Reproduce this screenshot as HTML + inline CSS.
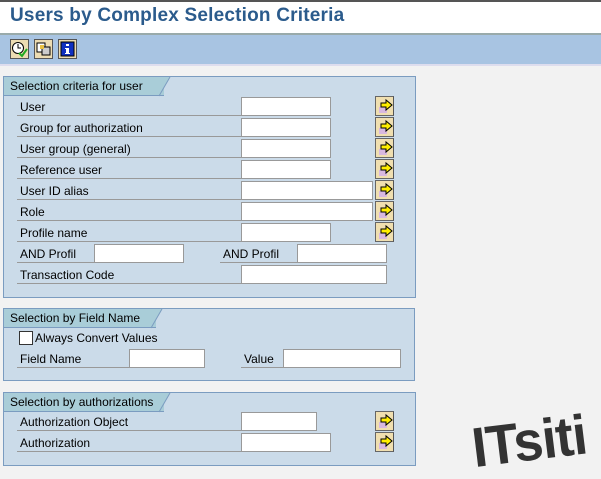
<!DOCTYPE html>
<html><head><meta charset="utf-8"><style>
body{margin:0;width:601px;height:475px;background:#f2f2f2;font-family:"Liberation Sans",sans-serif;font-size:12px;position:relative;overflow:hidden}
div{position:absolute;box-sizing:border-box}
.box{background:#cbdbe9;border:1px solid #7b9cc0}
.tab{background:#a9cdd8;height:19px;top:0;left:0;padding:2px 0 0 6px;color:#000;white-space:nowrap;border-bottom:1px solid #7b9cc0}
.lab{height:20px;border-bottom:1px solid #999;padding:4px 0 0 3px;color:#000}
.inp{height:19px;background:#fff;border:1px solid #999}
.btn{width:19px;height:20px;background:#f0dfb0;border:1px solid #666;border-right-color:#555}
</style></head><body>
<div style="left:0;top:0;width:601px;height:2px;background:#555"></div>
<div style="left:0;top:2px;width:601px;height:31px;background:#fff"></div>
<div style="left:10px;top:5px;font-size:19px;font-weight:bold;color:#2b5b8c;letter-spacing:0.2px">Users by Complex Selection Criteria</div>
<div style="left:0;top:33px;width:601px;height:2px;background:#9aa"></div>
<div style="left:0;top:35px;width:601px;height:29px;background:#a8c4e2"></div>
<div style="left:0;top:64px;width:601px;height:2px;background:#dde"></div>

<div style="left:10px;top:39px;width:19px;height:20px;background:#ecdcb2;border:1px solid #555">
<svg width="17" height="18" style="position:absolute;left:0;top:0"><circle cx="7" cy="8" r="5.5" fill="#fff" stroke="#000"/><path d="M7 4v4h3" stroke="#000" fill="none"/><path d="M8 13l3 3 5-7" stroke="#2a2" stroke-width="2" fill="none"/></svg></div>
<div style="left:34px;top:39px;width:19px;height:20px;background:#ecdcb2;border:1px solid #555">
<svg width="17" height="18" style="position:absolute;left:0;top:0"><rect x="2" y="3" width="8" height="9" fill="#fff" stroke="#000"/><rect x="7" y="7" width="8" height="8" fill="#ccc" stroke="#000"/><rect x="5" y="5" width="4" height="4" fill="#e8c040"/></svg></div>
<div style="left:58px;top:39px;width:19px;height:20px;background:#ecdcb2;border:1px solid #555">
<svg width="17" height="18" style="position:absolute;left:0;top:0"><rect x="2" y="2" width="13" height="14" fill="#1030c0" stroke="#000"/><rect x="7" y="4" width="3" height="2" fill="#fff"/><path d="M6 8h4v5h1v1H6v-1h1V9H6z" fill="#fff"/></svg></div>

<div class="box" style="left:3px;top:76px;width:413px;height:222px">
<div class="tab" style="width:160px">Selection criteria for user</div>
<svg style="position:absolute;left:155px;top:0" width="12" height="20"><polygon points="0,0 11,0 0,19" fill="#a9cdd8"/><line x1="11" y1="0" x2="0" y2="19" stroke="#7b9cc0"/></svg>
</div>
<div class="lab" style="left:17px;top:96px;width:224px">User</div><div class="inp" style="left:241px;top:97px;width:90px"></div>
<div class="lab" style="left:17px;top:117px;width:224px">Group for authorization</div><div class="inp" style="left:241px;top:118px;width:90px"></div>
<div class="lab" style="left:17px;top:138px;width:224px">User group (general)</div><div class="inp" style="left:241px;top:139px;width:90px"></div>
<div class="lab" style="left:17px;top:159px;width:224px">Reference user</div><div class="inp" style="left:241px;top:160px;width:90px"></div>
<div class="lab" style="left:17px;top:180px;width:224px">User ID alias</div><div class="inp" style="left:241px;top:181px;width:132px"></div>
<div class="lab" style="left:17px;top:201px;width:224px">Role</div><div class="inp" style="left:241px;top:202px;width:132px"></div>
<div class="lab" style="left:17px;top:222px;width:224px">Profile name</div><div class="inp" style="left:241px;top:223px;width:90px"></div>
<div class="lab" style="left:17px;top:243px;width:77px">AND Profil</div><div class="inp" style="left:94px;top:244px;width:90px"></div>
<div class="lab" style="left:220px;top:243px;width:77px">AND Profil</div><div class="inp" style="left:297px;top:244px;width:90px"></div>
<div class="lab" style="left:17px;top:264px;width:224px">Transaction Code</div><div class="inp" style="left:241px;top:265px;width:146px"></div>

<div class="box" style="left:3px;top:308px;width:412px;height:73px">
<div class="tab" style="width:152px">Selection by Field Name</div>
<svg style="position:absolute;left:147px;top:0" width="12" height="20"><polygon points="0,0 11,0 0,19" fill="#a9cdd8"/><line x1="11" y1="0" x2="0" y2="19" stroke="#7b9cc0"/></svg>
</div>
<div style="left:19px;top:331px;width:14px;height:14px;background:#fff;border:1px solid #333"></div>
<div style="left:35px;top:331px">Always Convert Values</div>
<div class="lab" style="left:17px;top:348px;width:112px">Field Name</div><div class="inp" style="left:129px;top:349px;width:76px"></div>
<div class="lab" style="left:241px;top:348px;width:42px">Value</div><div class="inp" style="left:283px;top:349px;width:118px"></div>

<div class="box" style="left:3px;top:392px;width:413px;height:74px">
<div class="tab" style="width:160px">Selection by authorizations</div>
<svg style="position:absolute;left:155px;top:0" width="12" height="20"><polygon points="0,0 11,0 0,19" fill="#a9cdd8"/><line x1="11" y1="0" x2="0" y2="19" stroke="#7b9cc0"/></svg>
</div>
<div class="lab" style="left:17px;top:411px;width:224px">Authorization Object</div><div class="inp" style="left:241px;top:412px;width:76px"></div>
<div class="lab" style="left:17px;top:432px;width:224px">Authorization</div><div class="inp" style="left:241px;top:433px;width:90px"></div>

<svg width="0" height="0" style="position:absolute"><defs><g id="ar"><rect x="3" y="10" width="8" height="6" fill="#d8b8e0"/><path d="M5 6h5V3l6 5-6 5v-3H5z" fill="#ffee00" stroke="#000"/></g></defs></svg>
<div class="btn" style="left:375px;top:96px"><svg width="18" height="18"><use href="#ar"/></svg></div>
<div class="btn" style="left:375px;top:117px"><svg width="18" height="18"><use href="#ar"/></svg></div>
<div class="btn" style="left:375px;top:138px"><svg width="18" height="18"><use href="#ar"/></svg></div>
<div class="btn" style="left:375px;top:159px"><svg width="18" height="18"><use href="#ar"/></svg></div>
<div class="btn" style="left:375px;top:180px"><svg width="18" height="18"><use href="#ar"/></svg></div>
<div class="btn" style="left:375px;top:201px"><svg width="18" height="18"><use href="#ar"/></svg></div>
<div class="btn" style="left:375px;top:222px"><svg width="18" height="18"><use href="#ar"/></svg></div>
<div class="btn" style="left:375px;top:411px"><svg width="18" height="18"><use href="#ar"/></svg></div>
<div class="btn" style="left:375px;top:432px"><svg width="18" height="18"><use href="#ar"/></svg></div>

<div style="left:476px;top:418px;font-size:56px;line-height:60px;font-weight:bold;color:#333;transform:rotate(-7deg) scaleX(0.95);transform-origin:0 100%;letter-spacing:-1px;font-family:'Liberation Sans',sans-serif;white-space:nowrap">ITsiti</div>
</body></html>
